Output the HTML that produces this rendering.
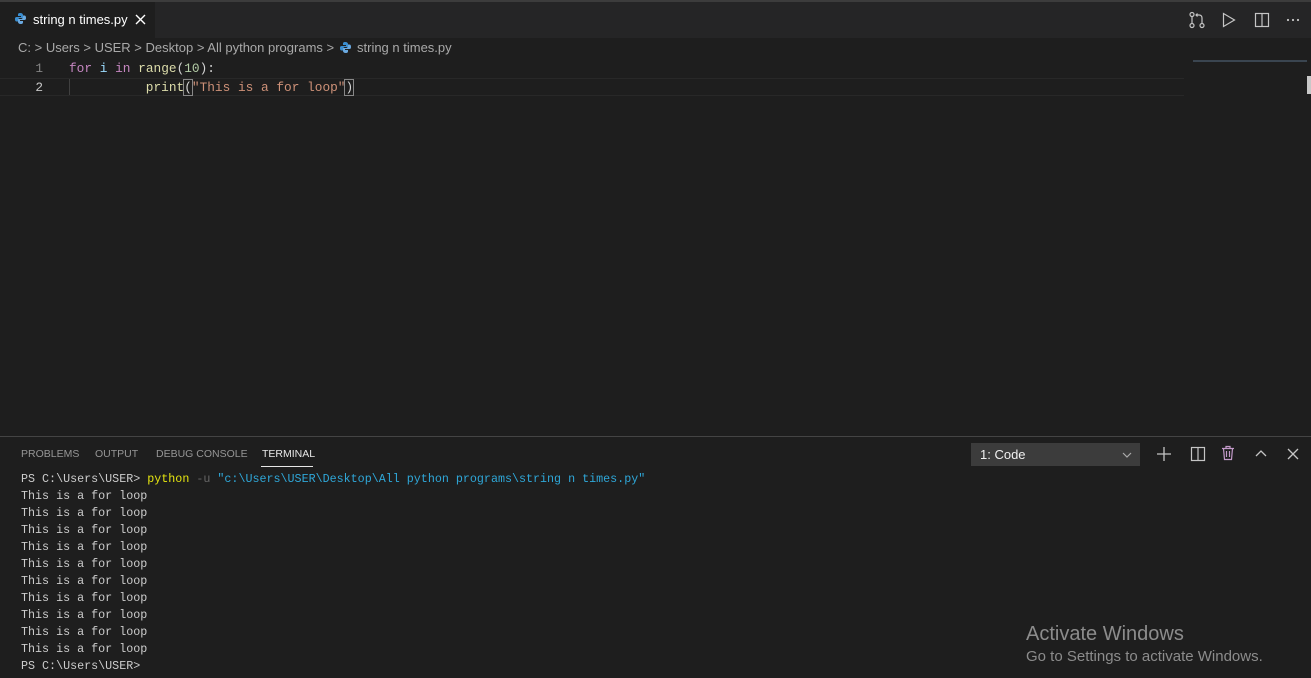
<!DOCTYPE html>
<html><head><style>
body{margin:0;width:1311px;height:678px;background:#1e1e1e;overflow:hidden;font-family:"Liberation Sans",sans-serif;position:relative}
.abs{position:absolute}
.tabbar{left:0;top:0;width:1311px;height:38px;background:#252526;border-top:2px solid #3c3c3c;box-sizing:border-box}
.tab{left:0;top:2px;width:155px;height:36px;background:#1e1e1e;color:#fff;font-size:13px}
.mono{font-family:"Liberation Mono",monospace;white-space:pre}
.crumb{top:40px;color:#a9a9a9;font-size:13px;white-space:pre}
.code{font-size:12.8px;line-height:19px}
.term{left:21px;top:471px;font-size:11.7px;line-height:17px;color:#ccc}
.ptab{top:448px;font-size:10.5px;color:#969696}
</style></head><body>
<div class="abs tabbar"></div>
<div class="abs tab">
 <svg class="abs" style="left:15px;top:11px" width="11" height="11" viewBox="0 0 11 11"><path d="M5.5 0C3 0 3 1 3 2v1h3v1H1.5C0 4 0 5.5 0 6s0 2.5 1.5 2.5H3V7c0-1 1-2 2-2h3V2c0-1-1-2-2.5-2z" fill="#3b8ed0"/><path d="M5.5 11C8 11 8 10 8 9V8H5V7h4.5C11 7 11 5.5 11 5s0-2.5-1.5-2.5H8V4c0 1-1 2-2 2H3v3c0 1 1 2 2.5 2z" fill="#6aa9e0"/></svg>
 <span class="abs" style="left:33px;top:10px">string n times.py</span>
 <svg class="abs" style="left:135px;top:12px" width="11" height="11" viewBox="0 0 11 11" stroke="#fff" stroke-width="1.4"><path d="M1 1l9 9M10 1L1 10"/></svg>
</div>
<svg class="abs" style="left:1188px;top:11px" width="18" height="18" viewBox="0 0 18 18" fill="none" stroke="#c5c5c5" stroke-width="1.2"><circle cx="4" cy="3.5" r="2"/><circle cx="14" cy="14.5" r="2"/><circle cx="4" cy="14.5" r="2"/><path d="M4 5.5v7M14 12.5V7c0-2-1-3-3-3H8M9.5 2.5L8 4l1.5 1.5"/></svg>
<svg class="abs" style="left:1221px;top:12px" width="16" height="16" viewBox="0 0 16 16" fill="none" stroke="#c5c5c5" stroke-width="1.2"><path d="M2.5 1.5v13l11-6.5z"/></svg>
<svg class="abs" style="left:1254px;top:12px" width="16" height="16" viewBox="0 0 16 16" fill="none" stroke="#c5c5c5" stroke-width="1.2"><rect x="1.5" y="1.5" width="13" height="13"/><path d="M8 1.5v13"/></svg>
<svg class="abs" style="left:1286px;top:18px" width="14" height="4" viewBox="0 0 14 4" fill="#c5c5c5"><circle cx="2" cy="2" r="1.1"/><circle cx="7" cy="2" r="1.1"/><circle cx="12" cy="2" r="1.1"/></svg>
<div class="abs crumb" style="left:18px">C: &gt; Users &gt; USER &gt; Desktop &gt; All python programs &gt;</div>
<div class="abs crumb" style="left:357px">string n times.py</div>
<svg class="abs" style="left:340px;top:42px" width="11" height="11" viewBox="0 0 11 11"><path d="M5.5 0C3 0 3 1 3 2v1h3v1H1.5C0 4 0 5.5 0 6s0 2.5 1.5 2.5H3V7c0-1 1-2 2-2h3V2c0-1-1-2-2.5-2z" fill="#3b8ed0"/><path d="M5.5 11C8 11 8 10 8 9V8H5V7h4.5C11 7 11 5.5 11 5s0-2.5-1.5-2.5H8V4c0 1-1 2-2 2H3v3c0 1 1 2 2.5 2z" fill="#6aa9e0"/></svg>
<div class="abs" style="left:0;top:78px;width:1184px;height:18px;border-top:1px solid #282828;border-bottom:1px solid #282828;box-sizing:border-box"></div>
<div class="abs" style="left:69px;top:79px;width:1px;height:16px;background:#404040"></div>
<div class="abs mono code" style="left:30px;top:59px;color:#858585;text-align:right;width:13px">1
<span style="color:#c6c6c6">2</span></div>
<div class="abs mono code" style="left:69px;top:59px;color:#d4d4d4"><span style="color:#c586c0">for</span> <span style="color:#9cdcfe">i</span> <span style="color:#c586c0">in</span> <span style="color:#dcdcaa">range</span>(<span style="color:#b5cea8">10</span>):
          <span style="color:#dcdcaa">print</span><span style="outline:1px solid #888">(</span><span style="color:#ce9178">"This is a for loop"</span><span style="outline:1px solid #888">)</span></div>
<div class="abs" style="left:1193px;top:60px;width:114px;height:2px;background:#3a4550"></div>
<div class="abs" style="left:1307px;top:76px;width:4px;height:18px;background:#c8c8c8"></div>
<div class="abs" style="left:0;top:436px;width:1311px;height:1px;background:#444"></div>
<div class="abs ptab" style="left:21px">PROBLEMS</div>
<div class="abs ptab" style="left:95px">OUTPUT</div>
<div class="abs ptab" style="left:156px">DEBUG CONSOLE</div>
<div class="abs ptab" style="left:262px;color:#e7e7e7">TERMINAL</div>
<div class="abs" style="left:261px;top:466px;width:52px;height:1px;background:#e7e7e7"></div>
<div class="abs" style="left:971px;top:443px;width:169px;height:23px;background:#3c3c3c;color:#f0f0f0;font-size:13px"><span class="abs" style="left:9px;top:4px">1: Code</span><svg class="abs" style="left:151px;top:9px" width="10" height="6" viewBox="0 0 10 6" fill="none" stroke="#aaa" stroke-width="1.2"><path d="M1 1l4 4 4-4"/></svg></div>
<svg class="abs" style="left:1156px;top:446px" width="16" height="16" viewBox="0 0 16 16" stroke="#c5c5c5" stroke-width="1.3"><path d="M8 1v14M1 8h14"/></svg>
<svg class="abs" style="left:1190px;top:446px" width="16" height="16" viewBox="0 0 16 16" fill="none" stroke="#c5c5c5" stroke-width="1.2"><rect x="1.5" y="1.5" width="13" height="13"/><path d="M8 1.5v13"/></svg>
<svg class="abs" style="left:1221px;top:445px" width="14" height="16" viewBox="0 0 14 16" fill="none" stroke="#c39ac9" stroke-width="1.2"><path d="M1 3.5h12M5 3.5V1.5h4v2M2.5 3.5l1 11h7l1-11M5.5 6v6M8.5 6v6"/></svg>
<svg class="abs" style="left:1254px;top:447px" width="14" height="14" viewBox="0 0 14 14" fill="none" stroke="#c5c5c5" stroke-width="1.3"><path d="M2 9l5-5 5 5"/></svg>
<svg class="abs" style="left:1286px;top:447px" width="14" height="14" viewBox="0 0 14 14" fill="none" stroke="#c5c5c5" stroke-width="1.3"><path d="M2 2l10 10M12 2L2 12"/></svg>
<div class="abs mono term">PS C:\Users\USER&gt; <span style="color:#e5e510">python</span> <span style="color:#666">-u</span> <span style="color:#2fa7d8">"c:\Users\USER\Desktop\All python programs\string n times.py"</span>
This is a for loop
This is a for loop
This is a for loop
This is a for loop
This is a for loop
This is a for loop
This is a for loop
This is a for loop
This is a for loop
This is a for loop
PS C:\Users\USER&gt;</div>
<div class="abs" style="left:1026px;top:623px;color:#8c8c8c;font-size:20px">Activate Windows</div>
<div class="abs" style="left:1026px;top:648px;color:#8c8c8c;font-size:15px">Go to Settings to activate Windows.</div>
</body></html>
